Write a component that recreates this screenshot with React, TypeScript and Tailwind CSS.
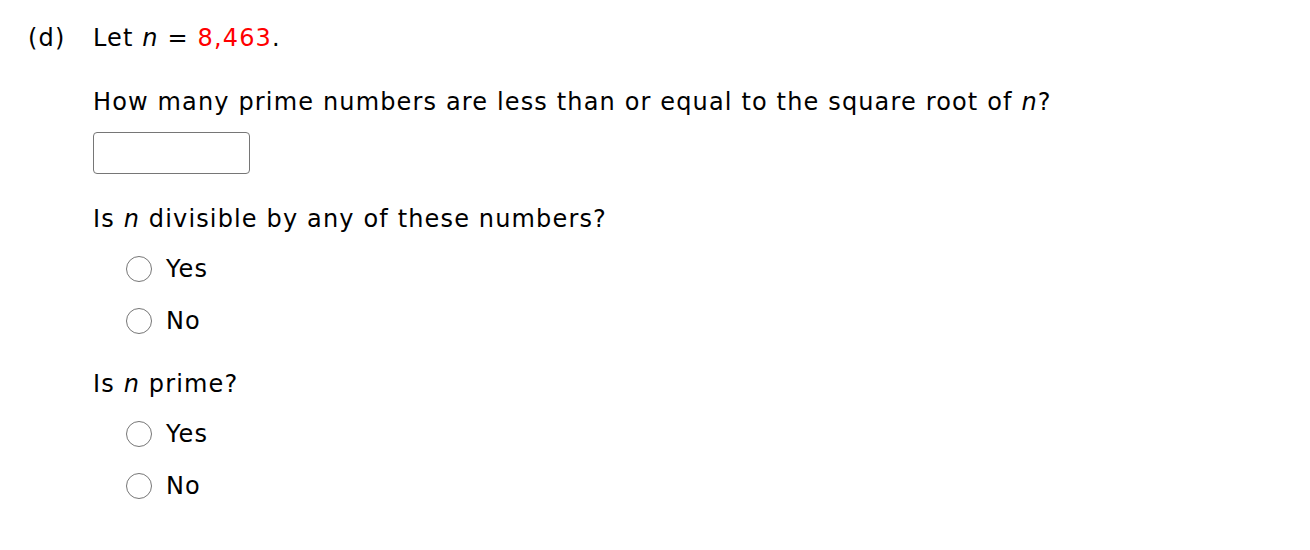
import React from 'react';

const Radio = ({ label }: { label: string }) => (
    <label className="flex items-center h-[52px]">
        <span className="w-[26px] h-[26px] rounded-full border-[1.5px] border-[#767676] bg-white mr-[14px]" />
        <span>{label}</span>
    </label>
);

export default function App() {
    return (
        <div className="w-[1310px] h-[550px] bg-white text-black text-[24px] leading-[32px] tracking-[1.15px] font-['Verdana','DejaVu_Sans',sans-serif]">
            <div className="flex pt-[22px] pl-[28px]">
                <div className="w-[65px]">(d)</div>
                <div className="flex-1">
                    <p>
                        Let <i>n</i> = <span className="text-[#ff0000]">8,463</span>.
                    </p>
                    <p className="mt-[32px]">
                        How many prime numbers are less than or equal to the square root of <i>n</i>?
                    </p>
                    <div className="mt-[14px] w-[157px] h-[42px] border-[1.5px] border-[#767676] rounded-[4px]" />
                    <p className="mt-[29px]">
                        Is <i>n</i> divisible by any of these numbers?
                    </p>
                    <div className="pl-[33px] mt-[8px]">
                        <Radio label="Yes" />
                        <Radio label="No" />
                    </div>
                    <p className="mt-[21px]">
                        Is <i>n</i> prime?
                    </p>
                    <div className="pl-[33px] mt-[8px]">
                        <Radio label="Yes" />
                        <Radio label="No" />
                    </div>
                </div>
            </div>
        </div>
    );
}
